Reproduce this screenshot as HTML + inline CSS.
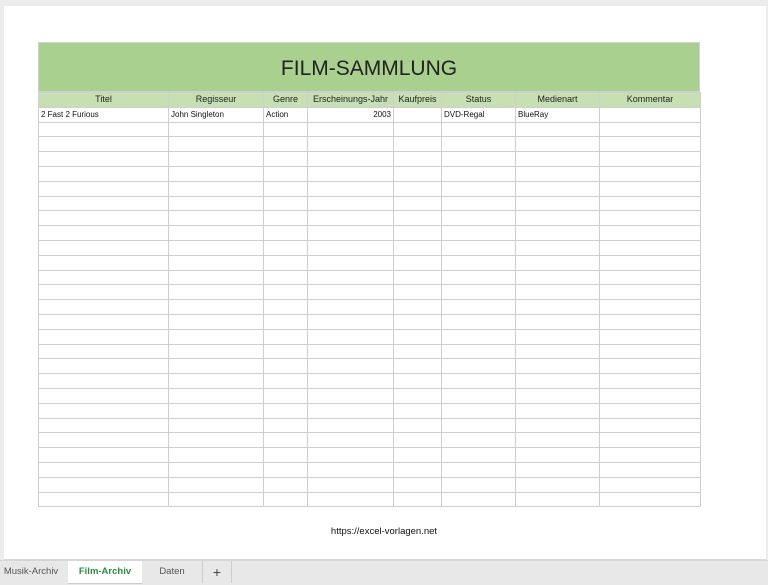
<!DOCTYPE html>
<html><head><meta charset="utf-8"><style>
body{margin:0;width:768px;height:584px;background:#ececec;position:relative;overflow:hidden;font-family:"Liberation Sans",sans-serif}
.page{position:absolute;left:4px;top:6px;width:762px;height:553px;background:#fff;border-bottom:1px solid #d8d8d8}
.title{position:absolute;left:38px;top:42px;width:662px;height:50px;background:#a9d08e;border:1px solid #d0d0d0;box-sizing:border-box;text-align:center;font-size:21px;line-height:52px;color:#222}
table{position:absolute;left:38px;top:92px;border-collapse:collapse;table-layout:fixed;width:663px}
td{border:1px solid #cfcfcf;height:13.8px;padding:0 2px;font-size:8px;line-height:13px;white-space:nowrap;overflow:hidden;color:#111}
tr.h td{background:#c6e0b4;text-align:center;font-size:9px;color:#222}
.url{position:absolute;left:0;width:768px;top:526px;text-align:center;font-size:9.5px;color:#111}
.tabs{position:absolute;left:0;top:560px;width:768px;height:24px;background:#e8e8e8;border-top:1px solid #d6d6d6;font-size:9.5px;color:#555}
.tab{position:absolute;top:0;height:22px;line-height:22px;text-align:center}
</style></head><body>
<div class="page"></div>
<div class="title">FILM-SAMMLUNG</div>
<table>
<colgroup><col style="width:130px"><col style="width:95px"><col style="width:44px"><col style="width:86px"><col style="width:48px"><col style="width:74px"><col style="width:84px"><col style="width:101px"></colgroup>
<tr class="h"><td>Titel</td><td>Regisseur</td><td>Genre</td><td>Erscheinungs-Jahr</td><td>Kaufpreis</td><td>Status</td><td>Medienart</td><td>Kommentar</td></tr>
<tr><td>2 Fast 2 Furious</td><td>John Singleton</td><td>Action</td><td style="text-align:right">2003</td><td></td><td>DVD-Regal</td><td>BlueRay</td><td></td></tr>
<tr><td></td><td></td><td></td><td></td><td></td><td></td><td></td><td></td></tr>
<tr><td></td><td></td><td></td><td></td><td></td><td></td><td></td><td></td></tr>
<tr><td></td><td></td><td></td><td></td><td></td><td></td><td></td><td></td></tr>
<tr><td></td><td></td><td></td><td></td><td></td><td></td><td></td><td></td></tr>
<tr><td></td><td></td><td></td><td></td><td></td><td></td><td></td><td></td></tr>
<tr><td></td><td></td><td></td><td></td><td></td><td></td><td></td><td></td></tr>
<tr><td></td><td></td><td></td><td></td><td></td><td></td><td></td><td></td></tr>
<tr><td></td><td></td><td></td><td></td><td></td><td></td><td></td><td></td></tr>
<tr><td></td><td></td><td></td><td></td><td></td><td></td><td></td><td></td></tr>
<tr><td></td><td></td><td></td><td></td><td></td><td></td><td></td><td></td></tr>
<tr><td></td><td></td><td></td><td></td><td></td><td></td><td></td><td></td></tr>
<tr><td></td><td></td><td></td><td></td><td></td><td></td><td></td><td></td></tr>
<tr><td></td><td></td><td></td><td></td><td></td><td></td><td></td><td></td></tr>
<tr><td></td><td></td><td></td><td></td><td></td><td></td><td></td><td></td></tr>
<tr><td></td><td></td><td></td><td></td><td></td><td></td><td></td><td></td></tr>
<tr><td></td><td></td><td></td><td></td><td></td><td></td><td></td><td></td></tr>
<tr><td></td><td></td><td></td><td></td><td></td><td></td><td></td><td></td></tr>
<tr><td></td><td></td><td></td><td></td><td></td><td></td><td></td><td></td></tr>
<tr><td></td><td></td><td></td><td></td><td></td><td></td><td></td><td></td></tr>
<tr><td></td><td></td><td></td><td></td><td></td><td></td><td></td><td></td></tr>
<tr><td></td><td></td><td></td><td></td><td></td><td></td><td></td><td></td></tr>
<tr><td></td><td></td><td></td><td></td><td></td><td></td><td></td><td></td></tr>
<tr><td></td><td></td><td></td><td></td><td></td><td></td><td></td><td></td></tr>
<tr><td></td><td></td><td></td><td></td><td></td><td></td><td></td><td></td></tr>
<tr><td></td><td></td><td></td><td></td><td></td><td></td><td></td><td></td></tr>
<tr><td></td><td></td><td></td><td></td><td></td><td></td><td></td><td></td></tr>
</table>
<div class="url">https://excel-vorlagen.net</div>
<div class="tabs">
<div class="tab" style="left:0;width:62px">Musik-Archiv</div>
<div class="tab" style="left:68px;width:74px;background:#fff;color:#2e8b47;font-weight:bold;border-bottom:1px solid #ccc">Film-Archiv</div>
<div class="tab" style="left:142px;width:60px;border-right:1px solid #ccc">Daten</div>
<div class="tab" style="left:203px;width:28px;border-right:1px solid #ccc;font-size:14px;color:#444">+</div>
</div>
</body></html>
